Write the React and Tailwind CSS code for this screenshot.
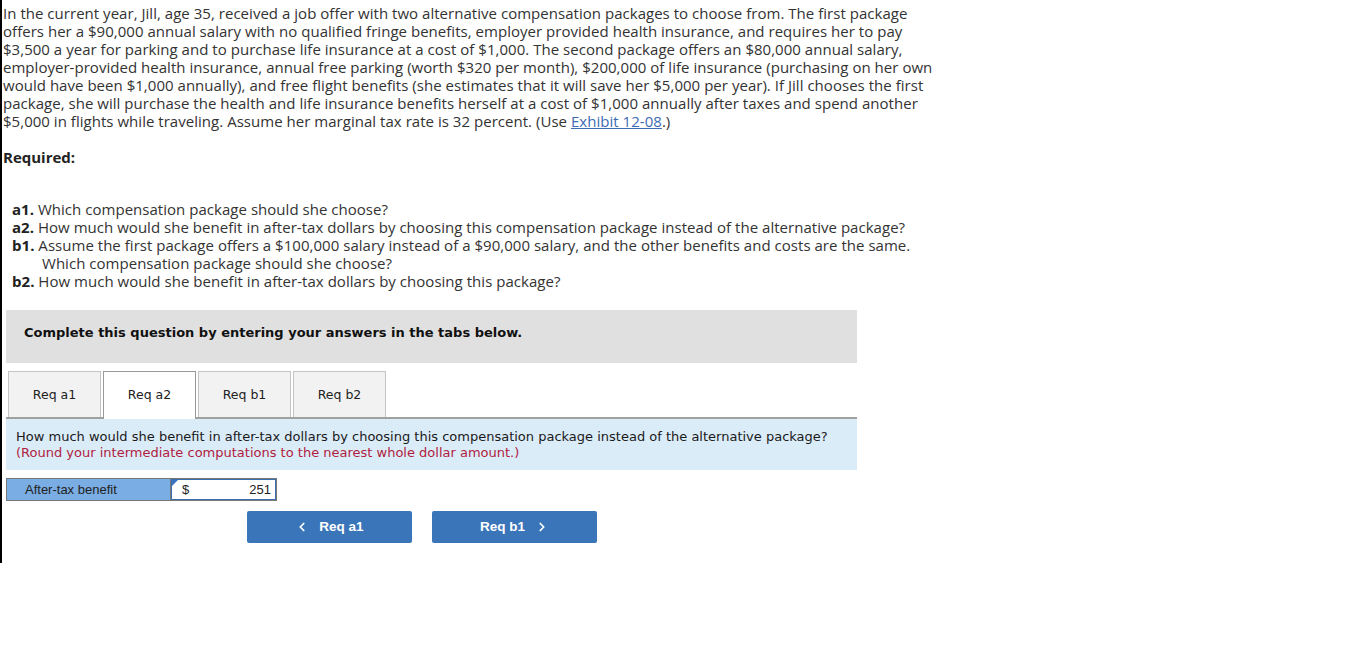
import { ChevronLeft, ChevronRight } from "lucide-react";

const tabs = ["Req a1", "Req a2", "Req b1", "Req b2"];

const intro = [
    "In the current year, Jill, age 35, received a job offer with two alternative compensation packages to choose from. The first package",
    "offers her a $90,000 annual salary with no qualified fringe benefits, employer provided health insurance, and requires her to pay",
    "$3,500 a year for parking and to purchase life insurance at a cost of $1,000. The second package offers an $80,000 annual salary,",
    "employer-provided health insurance, annual free parking (worth $320 per month), $200,000 of life insurance (purchasing on her own",
    "would have been $1,000 annually), and free flight benefits (she estimates that it will save her $5,000 per year). If Jill chooses the first",
    "package, she will purchase the health and life insurance benefits herself at a cost of $1,000 annually after taxes and spend another",
];

export default function App() {
    const active = 1;

    return (
        <div className="w-[1367px] h-[648px] bg-white">
            <div className="w-[932px] border-l-2 border-black pb-[20px] pl-[1px]">
                <div className="font-['Open_Sans',sans-serif] text-[15px] tracking-[0.03px] leading-[18px] text-[#333] pt-[4px] whitespace-nowrap">
                    {intro.map((l) => (
                        <p key={l}>{l}</p>
                    ))}
                    <p>
                        $5,000 in flights while traveling. Assume her marginal tax rate is 32 percent. (Use{" "}
                        <a href="#" className="text-[#3d6cb4] underline">Exhibit 12-08</a>.)
                    </p>
                </div>

                <p className="font-['Open_Sans',sans-serif] text-[15px] leading-[18px] font-bold text-[#222] mt-[18px]">Required:</p>

                <div className="font-['Open_Sans',sans-serif] text-[15px] tracking-[0.03px] leading-[18px] text-[#333] mt-[34px] pl-[9px] whitespace-nowrap">
                    <p><b className="text-[#222]">a1.</b> Which compensation package should she choose?</p>
                    <p><b className="text-[#222]">a2.</b> How much would she benefit in after-tax dollars by choosing this compensation package instead of the alternative package?</p>
                    <p><b className="text-[#222]">b1.</b> Assume the first package offers a $100,000 salary instead of a $90,000 salary, and the other benefits and costs are the same.</p>
                    <p className="pl-[30px]">Which compensation package should she choose?</p>
                    <p><b className="text-[#222]">b2.</b> How much would she benefit in after-tax dollars by choosing this package?</p>
                </div>

                <div className="ml-[3px] mt-[20px] w-[851px] h-[53px] bg-[#e0e0e0] flex items-center pl-[18px] pb-[7px]">
                    <span className="font-['DejaVu_Sans',sans-serif] text-[13px] font-bold text-[#111]">Complete this question by entering your answers in the tabs below.</span>
                </div>

                <div className="ml-[3px] mt-[8px] w-[851px] flex gap-[2px] pl-[2px] border-b-2 border-[#a0a0a0]">
                    {tabs.map((t, i) => (
                        <div
                            key={t}
                            className={
                                i === active
                                    ? "w-[93px] h-[48px] -mb-[2px] bg-white border border-b-0 border-[#999] flex items-center justify-center font-['DejaVu_Sans',sans-serif] text-[12.5px] text-[#222]"
                                    : "w-[93px] h-[46px] pt-[2px] bg-[#f2f2f2] border border-b-0 border-[#c4c4c4] flex items-center justify-center font-['DejaVu_Sans',sans-serif] text-[12.5px] text-[#222]"
                            }
                        >
                            {t}
                        </div>
                    ))}
                </div>

                <div className="ml-[3px] w-[851px] h-[51px] bg-[#dbecf9] pl-[10px] pt-[10px] font-['DejaVu_Sans',sans-serif] text-[13px] leading-[16px] whitespace-nowrap">
                    <p className="text-[#1a1a1a]">How much would she benefit in after-tax dollars by choosing this compensation package instead of the alternative package?</p>
                    <p className="text-[#b01d3f]">(Round your intermediate computations to the nearest whole dollar amount.)</p>
                </div>

                <div className="ml-[3px] mt-[8px] flex h-[23px] border border-[#777] w-[271px]">
                    <div className="w-[164px] bg-[#7aade3] border-r border-[#777] flex items-center pl-[18px] font-['Liberation_Sans',sans-serif] text-[13px] text-[#222]">
                        After-tax benefit
                    </div>
                    <div className="relative flex-1 bg-white border border-[#3b6fb0] flex items-center justify-between pl-[10px] pr-[4px] font-['Liberation_Sans',sans-serif] text-[13px] text-[#222]">
                        <span className="absolute left-0 top-0 w-0 h-0 border-t-[6px] border-r-[6px] border-t-[#3b73c0] border-r-transparent"></span>
                        <span>$</span>
                        <span>251</span>
                    </div>
                </div>

                <div className="mt-[10px] flex gap-[20px] pl-[244px]">
                    <button className="w-[165px] h-[32px] bg-[#3a75ba] rounded-[2px] flex items-center justify-center gap-[10px] text-white font-['Liberation_Sans',sans-serif] font-bold text-[13.5px]">
                        <ChevronLeft size={14} strokeWidth={3} />
                        <span>Req a1</span>
                    </button>
                    <button className="w-[165px] h-[32px] bg-[#3a75ba] rounded-[2px] flex items-center justify-center gap-[10px] text-white font-['Liberation_Sans',sans-serif] font-bold text-[13.5px]">
                        <span>Req b1</span>
                        <ChevronRight size={14} strokeWidth={3} />
                    </button>
                </div>
            </div>
        </div>
    );
}
